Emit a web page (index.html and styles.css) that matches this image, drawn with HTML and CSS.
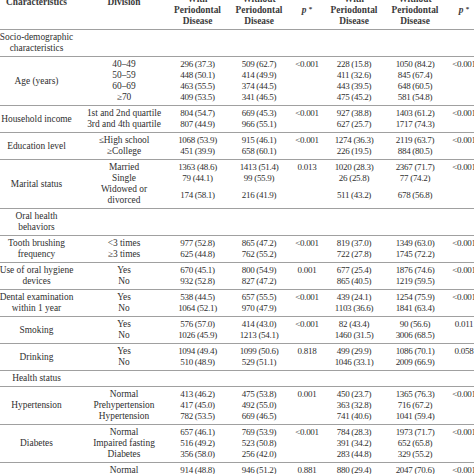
FILE: index.html
```html
<!DOCTYPE html>
<html lang="en">
<head>
<meta charset="utf-8">
<title>Characteristics by periodontal disease</title>
<link rel="stylesheet" href="styles.css">
</head>
<body>
<table class="tbl">
  <colgroup>
    <col class="c-char"><col class="c-div"><col class="c-with"><col class="c-without"><col class="c-p"><col class="c-with2"><col class="c-without2"><col class="c-p2">
  </colgroup>
  <thead>
    <tr class="hd-top">
      <th rowspan="2">Characteristics</th>
      <th rowspan="2">Division</th>
      <th colspan="3"></th>
      <th colspan="3"></th>
    </tr>
    <tr class="hd-sub">
      <th>With<br>Periodontal<br>Disease</th>
      <th>Without<br>Periodontal<br>Disease</th>
      <th><i>p</i> <sup class="ast">*</sup></th>
      <th>With<br>Periodontal<br>Disease</th>
      <th>Without<br>Periodontal<br>Disease</th>
      <th><i>p</i> <sup class="ast">*</sup></th>
    </tr>
  </thead>
  <tbody>
    <tr><td class="lbl">Socio-demographic<br>characteristics</td><td></td><td></td><td></td><td></td><td></td><td></td><td></td></tr>
  </tbody>
  <tbody>
    <tr><td class="lbl" rowspan="4">Age (years)</td><td>40–49</td><td class="num">296 (37.3)</td><td class="num">509 (62.7)</td><td class="p num" rowspan="4">&lt;0.001</td><td class="num">228 (15.8)</td><td class="num">1050 (84.2)</td><td class="p num" rowspan="4">&lt;0.001</td></tr>
    <tr><td>50–59</td><td class="num">448 (50.1)</td><td class="num">414 (49.9)</td><td class="num">411 (32.6)</td><td class="num">845 (67.4)</td></tr>
    <tr><td>60–69</td><td class="num">463 (55.5)</td><td class="num">374 (44.5)</td><td class="num">443 (39.5)</td><td class="num">648 (60.5)</td></tr>
    <tr><td>≥70</td><td class="num">409 (53.5)</td><td class="num">341 (46.5)</td><td class="num">475 (45.2)</td><td class="num">581 (54.8)</td></tr>
  </tbody>
  <tbody>
    <tr><td class="lbl" rowspan="2">Household income</td><td>1st and 2nd quartile</td><td class="num">804 (54.7)</td><td class="num">669 (45.3)</td><td class="p num" rowspan="2">&lt;0.001</td><td class="num">927 (38.8)</td><td class="num">1403 (61.2)</td><td class="p num" rowspan="2">&lt;0.001</td></tr>
    <tr><td>3rd and 4th quartile</td><td class="num">807 (44.9)</td><td class="num">966 (55.1)</td><td class="num">627 (25.7)</td><td class="num">1717 (74.3)</td></tr>
  </tbody>
  <tbody>
    <tr><td class="lbl" rowspan="2">Education level</td><td>≤High school</td><td class="num">1068 (53.9)</td><td class="num">915 (46.1)</td><td class="p num" rowspan="2">&lt;0.001</td><td class="num">1274 (36.3)</td><td class="num">2119 (63.7)</td><td class="p num" rowspan="2">&lt;0.001</td></tr>
    <tr><td>≥College</td><td class="num">451 (39.9)</td><td class="num">658 (60.1)</td><td class="num">226 (19.5)</td><td class="num">884 (80.5)</td></tr>
  </tbody>
  <tbody>
    <tr><td class="lbl" rowspan="3">Marital status</td><td>Married</td><td class="num">1363 (48.6)</td><td class="num">1413 (51.4)</td><td class="p num" rowspan="3">0.013</td><td class="num">1020 (28.3)</td><td class="num">2367 (71.7)</td><td class="p num" rowspan="3">&lt;0.001</td></tr>
    <tr><td>Single</td><td class="num">79 (44.1)</td><td class="num">99 (55.9)</td><td class="num">26 (25.8)</td><td class="num">77 (74.2)</td></tr>
    <tr><td>Widowed or<br>divorced</td><td class="num">174 (58.1)</td><td class="num">216 (41.9)</td><td class="num">511 (43.2)</td><td class="num">678 (56.8)</td></tr>
  </tbody>
  <tbody>
    <tr><td class="lbl">Oral health<br>behaviors</td><td></td><td></td><td></td><td></td><td></td><td></td><td></td></tr>
  </tbody>
  <tbody>
    <tr><td class="lbl" rowspan="2">Tooth brushing<br>frequency</td><td>&lt;3 times</td><td class="num">977 (52.8)</td><td class="num">865 (47.2)</td><td class="p num" rowspan="2">&lt;0.001</td><td class="num">819 (37.0)</td><td class="num">1349 (63.0)</td><td class="p num" rowspan="2">&lt;0.001</td></tr>
    <tr><td>≥3 times</td><td class="num">625 (44.8)</td><td class="num">762 (55.2)</td><td class="num">722 (27.8)</td><td class="num">1745 (72.2)</td></tr>
  </tbody>
  <tbody>
    <tr><td class="lbl" rowspan="2">Use of oral hygiene<br>devices</td><td>Yes</td><td class="num">670 (45.1)</td><td class="num">800 (54.9)</td><td class="p num" rowspan="2">0.001</td><td class="num">677 (25.4)</td><td class="num">1876 (74.6)</td><td class="p num" rowspan="2">&lt;0.001</td></tr>
    <tr><td>No</td><td class="num">932 (52.8)</td><td class="num">827 (47.2)</td><td class="num">865 (40.5)</td><td class="num">1219 (59.5)</td></tr>
  </tbody>
  <tbody>
    <tr><td class="lbl" rowspan="2">Dental examination<br>within 1 year</td><td>Yes</td><td class="num">538 (44.5)</td><td class="num">657 (55.5)</td><td class="p num" rowspan="2">&lt;0.001</td><td class="num">439 (24.1)</td><td class="num">1254 (75.9)</td><td class="p num" rowspan="2">&lt;0.001</td></tr>
    <tr><td>No</td><td class="num">1064 (52.1)</td><td class="num">970 (47.9)</td><td class="num">1103 (36.6)</td><td class="num">1841 (63.4)</td></tr>
  </tbody>
  <tbody>
    <tr><td class="lbl" rowspan="2">Smoking</td><td>Yes</td><td class="num">576 (57.0)</td><td class="num">414 (43.0)</td><td class="p num" rowspan="2">&lt;0.001</td><td class="num">82 (43.4)</td><td class="num">90 (56.6)</td><td class="p num" rowspan="2">0.011</td></tr>
    <tr><td>No</td><td class="num">1026 (45.9)</td><td class="num">1213 (54.1)</td><td class="num">1460 (31.5)</td><td class="num">3006 (68.5)</td></tr>
  </tbody>
  <tbody>
    <tr><td class="lbl" rowspan="2">Drinking</td><td>Yes</td><td class="num">1094 (49.4)</td><td class="num">1099 (50.6)</td><td class="p num" rowspan="2">0.818</td><td class="num">499 (29.9)</td><td class="num">1086 (70.1)</td><td class="p num" rowspan="2">0.058</td></tr>
    <tr><td>No</td><td class="num">510 (48.9)</td><td class="num">529 (51.1)</td><td class="num">1046 (33.1)</td><td class="num">2009 (66.9)</td></tr>
  </tbody>
  <tbody>
    <tr><td class="lbl">Health status</td><td></td><td></td><td></td><td></td><td></td><td></td><td></td></tr>
  </tbody>
  <tbody>
    <tr><td class="lbl" rowspan="3">Hypertension</td><td>Normal</td><td class="num">413 (46.2)</td><td class="num">475 (53.8)</td><td class="p num" rowspan="3">0.001</td><td class="num">450 (23.7)</td><td class="num">1365 (76.3)</td><td class="p num" rowspan="3">&lt;0.001</td></tr>
    <tr><td>Prehypertension</td><td class="num">417 (45.0)</td><td class="num">492 (55.0)</td><td class="num">363 (32.8)</td><td class="num">716 (67.2)</td></tr>
    <tr><td>Hypertension</td><td class="num">782 (53.5)</td><td class="num">669 (46.5)</td><td class="num">741 (40.6)</td><td class="num">1041 (59.4)</td></tr>
  </tbody>
  <tbody>
    <tr><td class="lbl" rowspan="3">Diabetes</td><td>Normal</td><td class="num">657 (46.1)</td><td class="num">769 (53.9)</td><td class="p num" rowspan="3">&lt;0.001</td><td class="num">784 (28.3)</td><td class="num">1973 (71.7)</td><td class="p num" rowspan="3">&lt;0.001</td></tr>
    <tr><td>Impaired fasting</td><td class="num">516 (49.2)</td><td class="num">523 (50.8)</td><td class="num">391 (34.2)</td><td class="num">652 (65.8)</td></tr>
    <tr><td>Diabetes</td><td class="num">356 (58.0)</td><td class="num">256 (42.0)</td><td class="num">283 (44.8)</td><td class="num">329 (55.2)</td></tr>
  </tbody>
  <tbody>
    <tr><td class="lbl"></td><td>Normal</td><td class="num">914 (48.8)</td><td class="num">946 (51.2)</td><td class="p num">0.881</td><td class="num">880 (29.4)</td><td class="num">2047 (70.6)</td><td class="p num">&lt;0.001</td></tr>
  </tbody>
</table>
</body>
</html>
```

FILE: styles.css
```css
html, body {
  margin: 0;
  padding: 0;
  background: #ffffff;
  overflow: hidden;
}

body {
  font-family: "Liberation Serif", "Times New Roman", serif;
  font-size: 9.4px;
  color: #2f2f2f;
}

.tbl {
  border-collapse: collapse;
  table-layout: fixed;
  width: 490px;
  margin: -24px 0 0 -10px;
}

.c-char { width: 93px; }
.c-div { width: 82px; }
.c-with { width: 65px; }
.c-without { width: 58px; }
.c-p { width: 38px; }
.c-with2 { width: 56px; }
.c-without2 { width: 66px; }
.c-p2 { width: 32px; }

.tbl th,
.tbl td {
  padding: 0;
  text-align: center;
  line-height: 11px;
  vertical-align: middle;
  white-space: nowrap;
}

.tbl thead th {
  font-weight: bold;
  color: #3a3a3a;
}

.hd-top th {
  height: 16px;
}

.hd-sub th {
  padding: 2px 0;
}

.ast {
  font-size: 7px;
  line-height: 0;
  vertical-align: 2px;
}

.tbl tbody {
  border-top: 1px solid #a0a0a0;
}

.tbl tbody tr:first-child td {
  padding-top: 2px;
}

.tbl tbody tr:last-child td {
  padding-bottom: 2px;
}

.tbl tbody td.lbl {
  padding: 2px 0;
}

.tbl tbody td.p {
  padding: 2px 0;
  vertical-align: top;
}

.num {
  font-size: 9px;
  letter-spacing: -0.3px;
}
```
